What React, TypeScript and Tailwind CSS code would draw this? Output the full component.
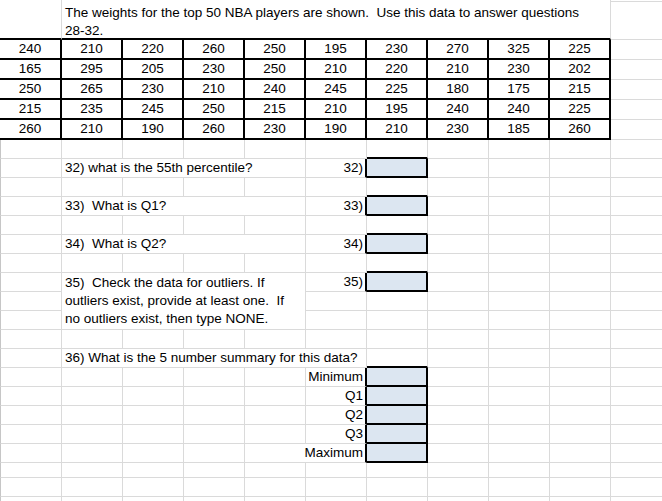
import React from 'react';
import clsx from 'clsx';

type Edge = 'thin' | 'thick' | 'none';
type Align = 'left' | 'center' | 'right';

interface CellSpec {
  text?: React.ReactNode;
  cs?: 1 | 2 | 4 | 5 | 9;
  rs?: 1 | 2 | 3;
  r?: Edge;
  b?: Edge;
  lead?: boolean;
  fill?: boolean;
  align?: Align;
  bottom?: boolean;
  top?: boolean;
}

const RIGHT: Record<Edge, string> = {
  thin: 'border-r border-r-[#dadada]',
  thick: 'border-r-2 border-r-black',
  none: '',
};
const BOTTOM: Record<Edge, string> = {
  thin: 'border-b border-b-[#dadada]',
  thick: 'border-b-2 border-b-black',
  none: '',
};
const COL_SPAN = { 1: '', 2: 'col-span-2', 4: 'col-span-4', 5: 'col-span-5', 9: 'col-span-9' };
const ROW_SPAN = { 1: '', 2: 'row-span-2', 3: 'row-span-3' };
const ALIGN: Record<Align, string> = {
  left: 'justify-start pl-[3px]',
  center: 'justify-center',
  right: 'justify-end pr-[2px]',
};

const Cell: React.FC<{ spec: CellSpec }> = ({ spec }) => {
  const { text, cs = 1, rs = 1, r = 'thin', b = 'thin', lead, fill, align = 'left', bottom, top } = spec;
  return (
    <div
      className={clsx(
        'flex min-w-0 whitespace-pre',
        bottom ? 'items-end pb-px' : top ? 'items-start pt-[4px]' : 'items-center',
        COL_SPAN[cs],
        ROW_SPAN[rs],
        RIGHT[r],
        BOTTOM[b],
        lead && 'border-l border-l-[#c6c6c6]',
        fill && 'bg-[#dce6f1]',
        ALIGN[align]
      )}
    >
      {text}
    </div>
  );
};

const weights = [
  [240, 210, 220, 260, 250, 195, 230, 270, 325, 225],
  [165, 295, 205, 230, 250, 210, 220, 210, 230, 202],
  [250, 265, 230, 210, 240, 245, 225, 180, 175, 215],
  [215, 235, 245, 250, 215, 210, 195, 240, 240, 225],
  [260, 210, 190, 260, 230, 190, 210, 230, 185, 260],
];

// answer box: filled cell with a medium border on its right and bottom gridlines
const box: CellSpec = { fill: true, r: 'thick', b: 'thick' };

const blank = (boxTop = false): CellSpec[] => [
  { lead: true },
  {}, {}, {}, {}, {},
  { b: boxTop ? 'thick' : 'thin' },
  {}, {}, {}, {},
];

const question = (text: string, label: string): CellSpec[] => [
  { lead: true },
  { cs: 4, text },
  { text: label, align: 'right', r: 'thick' },
  box,
  {}, {}, {}, {},
];

const summary = (label: string): CellSpec[] => [
  { lead: true },
  {}, {}, {}, {},
  { text: label, align: 'right', r: 'thick' },
  box,
  {}, {}, {}, {},
];

const rows: CellSpec[][] = [
  // title block
  [
    { rs: 2, b: 'thick' },
    {
      cs: 9,
      rs: 2,
      b: 'thick',
      top: true,
      text: (
        <span className="whitespace-pre-wrap leading-[18px]">
          The weights for the top 50 NBA players are shown.  Use this data to answer questions{' '}
          <span className="whitespace-nowrap">28-32.</span>
        </span>
      ),
    },
    {},
  ],
  [{}],
  // data table
  ...weights.map((row) => [
    ...row.map((w): CellSpec => ({ text: w, align: 'center', r: 'thick', b: 'thick' })),
    {},
  ]),
  blank(true),
  question('32) what is the 55th percentile?', '32)'),
  blank(true),
  question('33)  What is Q1?', '33)'),
  blank(true),
  question('34)  What is Q2?', '34)'),
  blank(true),
  [
    { lead: true },
    {
      cs: 4,
      rs: 3,
      bottom: true,
      text: (
        <span className="leading-[18px]">
          {'35)  Check the data for outliers. If'}
          <br />
          {'outliers exist, provide at least one.  If'}
          <br />
          {'no outliers exist, then type NONE.'}
        </span>
      ),
    },
    { text: '35)', align: 'right', r: 'thick' },
    box,
    {}, {}, {}, {},
  ],
  [{ lead: true }, {}, {}, {}, {}, {}, {}],
  [{ lead: true }, {}, {}, {}, {}, {}, {}],
  blank(),
  [{ lead: true }, { cs: 5, text: '36) What is the 5 number summary for this data?' }, { b: 'thick' }, {}, {}, {}, {}],
  summary('Minimum'),
  summary('Q1'),
  summary('Q2'),
  summary('Q3'),
  [
    { lead: true },
    {}, {}, {},
    { cs: 2, text: 'Maximum', align: 'right', r: 'thick' },
    box,
    {}, {}, {}, {},
  ],
  blank(),
  blank(),
  blank(),
];

export default function App() {
  return (
    <div className="h-[501px] w-[662px] overflow-hidden bg-white font-['Liberation_Sans',Arial,sans-serif] text-[13.5px] text-black">
      <div className="grid grid-cols-[62px_repeat(10,61px)] grid-rows-[2px_38px_repeat(5,20px)_repeat(17,19px)_15px_19px_19px]">
        {rows.flatMap((row, i) => row.map((spec, j) => <Cell key={`${i}-${j}`} spec={spec} />))}
      </div>
    </div>
  );
}
